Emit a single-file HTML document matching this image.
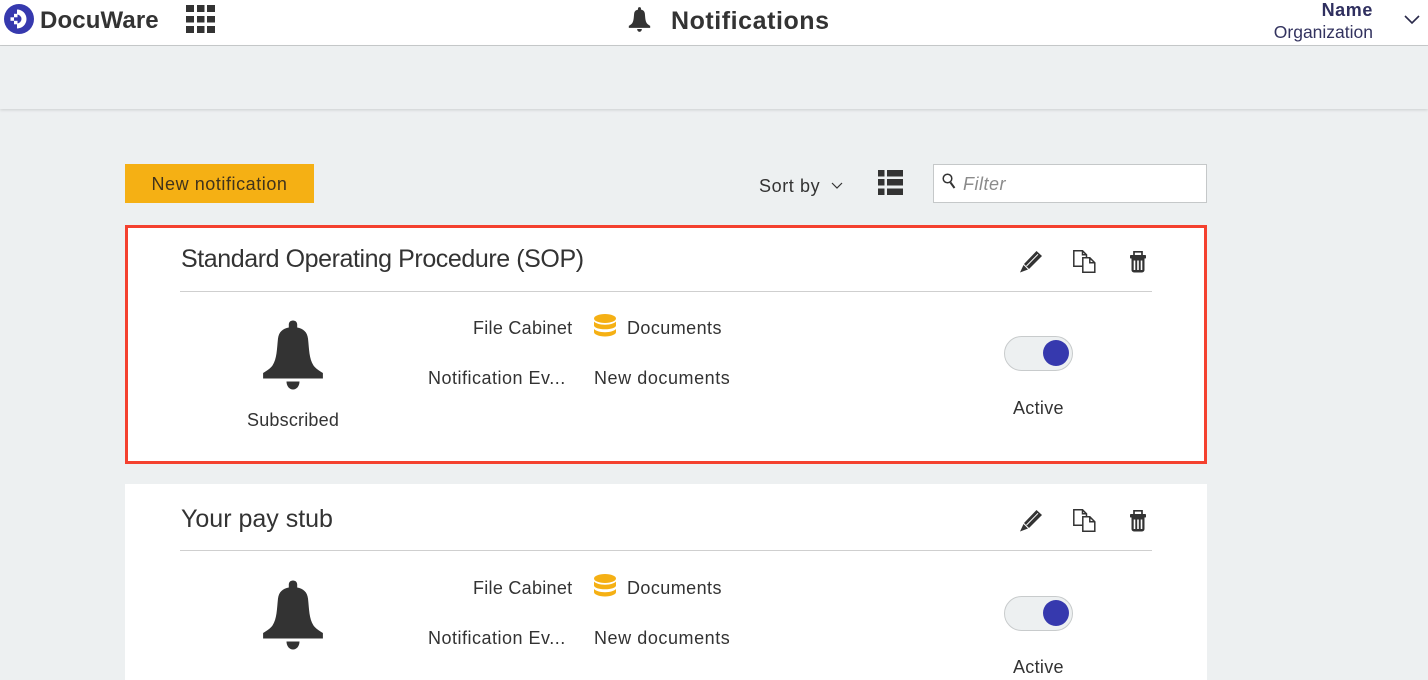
<!DOCTYPE html>
<html><head><meta charset="utf-8"><style>
html,body{margin:0;padding:0}
body{width:1428px;height:680px;overflow:hidden;position:relative;background:#edf0f1;font-family:"Liberation Sans",sans-serif;color:#333}
.a{position:absolute;white-space:nowrap}
.t{font-size:18px;line-height:24px}
svg{position:absolute;display:block}
</style></head><body>
<div class="a" style="left:0;top:0;width:1428px;height:45px;background:#fff;border-bottom:1px solid #c9cccd"></div>
<div class="a" style="left:0;top:46px;width:1428px;height:63px;background:#edf0f1;box-shadow:0 1px 3px rgba(0,0,0,.14)"></div>

<svg style="left:4px;top:4px" width="30" height="30" viewBox="0 0 30 30"><circle cx="15" cy="15" r="15" fill="#3639ae"/><path d="M13 5.500a9.500 9.500 0 1 1 0 19v-5a4.500 4.500 0 1 0 0-9z" fill="#fff"/><rect x="6.500" y="13.300" width="3.500" height="3.500" fill="#fff"/><rect x="10" y="9.800" width="3.500" height="3.500" fill="#fff"/><rect x="10" y="16.800" width="3.500" height="3.500" fill="#fff"/></svg>
<div class="a" style="left:40px;top:7px;font-size:24px;line-height:28px;font-weight:700;letter-spacing:.12px;color:#333">DocuWare</div>
<svg style="left:186px;top:5px" width="29" height="28" viewBox="0 0 29 28" fill="#333"><rect x="0" y="0" width="8" height="7"/><rect x="11" y="0" width="7.500" height="7"/><rect x="21" y="0" width="8" height="7"/><rect x="0" y="11" width="8" height="6.500"/><rect x="11" y="11" width="7.500" height="6.500"/><rect x="21" y="11" width="8" height="6.500"/><rect x="0" y="21" width="8" height="7"/><rect x="11" y="21" width="7.500" height="7"/><rect x="21" y="21" width="8" height="7"/></svg>

<svg style="left:628px;top:7px" width="23" height="25" viewBox="0 0 60 70" fill="#333"><path d="M30 .5c2.600 0 4.200 1.800 4.200 4V7.500c6 1 10 4.500 10.800 11 1.200 11 1 20 5.500 27 2.300 3.200 5.500 5 9.400 7.500v5.500H.100V53c3.900-2.500 7.100-4.300 9.400-7.500 4.500-7 4.300-16 5.500-27 .8-6.500 4.800-10 10.800-11V4.500C25.800 2.300 27.400 .5 30 .5z"/><path d="M23.500 61.500h13c0 4.500-2.800 8-6.500 8s-6.500-3.500-6.500-8z"/></svg>
<div class="a" style="left:671px;top:5px;font-size:25px;line-height:32px;font-weight:700;letter-spacing:.55px;color:#333">Notifications</div>

<div class="a" style="right:55px;top:-2px;font-size:18px;line-height:24px;font-weight:700;letter-spacing:.6px;color:#2f2f5f">Name</div>
<div class="a" style="right:55px;top:20px;font-size:17.500px;line-height:24px;color:#33335f">Organization</div>
<svg style="left:1403px;top:13px" width="18" height="12" viewBox="0 0 18 12"><path d="M2 3l7 7 7-7" fill="none" stroke="#2a2a4a" stroke-width="1.600"/></svg>

<div class="a" style="left:125px;top:164px;width:189px;height:39px;background:#f5b014;font-size:18px;line-height:40px;text-align:center;letter-spacing:.56px;color:#40331c">New notification</div>
<div class="a t" style="left:759px;top:174px;letter-spacing:.6px">Sort by</div>
<svg style="left:831px;top:181px" width="12" height="9" viewBox="0 0 12 9"><path d="M1 2l5 5 5-5" fill="none" stroke="#333" stroke-width="1.200"/></svg>
<svg style="left:878px;top:170px" width="25" height="25" viewBox="0 0 25 25" fill="#333"><rect width="6.500" height="6.500"/><rect x="9" width="16" height="6.500"/><rect y="9" width="6.500" height="6.500"/><rect x="9" y="9" width="16" height="6.500"/><rect y="18.500" width="6.500" height="6.500"/><rect x="9" y="18.500" width="16" height="6.500"/></svg>
<div class="a" style="left:933px;top:164px;width:272px;height:37px;background:#fff;border:1px solid #c5c8c9"></div>
<svg style="left:941px;top:172px" width="16" height="18" viewBox="0 0 16 18"><circle cx="6.500" cy="6.500" r="4.300" fill="none" stroke="#333" stroke-width="1.500"/><path d="M9.500 10.500l4 5.500" stroke="#333" stroke-width="2"/></svg>
<div class="a" style="left:963px;top:172px;font-size:18px;line-height:24px;font-style:italic;letter-spacing:.5px;color:#8b8b8b">Filter</div>

<div class="a" style="left:125px;top:225px;width:1076px;height:233px;background:#fff;border:3px solid #f4412f"></div>
<div class="a" style="left:125px;top:484px;width:1082px;height:196px;background:#fff"></div>

<!-- card 1 -->
<div class="a" style="left:181px;top:243px;font-size:25px;line-height:32px;letter-spacing:-.42px;color:#333">Standard Operating Procedure (SOP)</div>
<div class="a" style="left:180px;top:291px;width:972px;height:1px;background:#cfcfcf"></div>
<svg style="left:1020px;top:250px" width="22" height="23" viewBox="0 0 22 23"><path d="M16.500 1L22 6 9 19 4 14z" fill="#333"/><path d="M6.500 16L18 4.300" stroke="#fff" stroke-width="1"/><path d="M3.500 15l4.500 4.500L0 22.500z" fill="#333"/></svg>
<svg style="left:1073px;top:250px" width="23" height="23" viewBox="0 0 23 23" fill="#fff" stroke="#333" stroke-width="1.500"><path d="M.800.800h8.700l4 4v11.500H.800z"/><path d="M9.500.800v4h4" fill="none"/><path d="M9.800 7.800h7l5 5v9.400H9.800z"/><path d="M16.800 7.800v5h5" fill="none"/></svg>
<svg style="left:1129px;top:250px" width="18" height="23" viewBox="0 0 18 23" fill="#333"><path d="M5 5.500V1.800h8v3.700" fill="none" stroke="#333" stroke-width="1.700"/><rect x="1" y="5" width="16" height="3.500" rx=".8"/><path fill-rule="evenodd" d="M2.500 8h13v12a2.500 2.500 0 0 1-2.500 2.500H5A2.500 2.500 0 0 1 2.500 20zM4.700 10.500v9.500h1.600v-9.500zM8.200 10.500v9.500h1.600v-9.500zM11.700 10.500v9.500h1.600v-9.500z"/></svg>
<svg style="left:263px;top:320px" width="60" height="70" viewBox="0 0 60 70" fill="#333"><path d="M30 .5c2.600 0 4.200 1.800 4.200 4V7.500c6 1 10 4.500 10.800 11 1.200 11 1 20 5.500 27 2.300 3.200 5.500 5 9.400 7.500v5.500H.100V53c3.900-2.500 7.100-4.300 9.400-7.500 4.500-7 4.300-16 5.500-27 .8-6.500 4.800-10 10.800-11V4.500C25.800 2.300 27.400 .5 30 .5z"/><path d="M23.500 61.500h13c0 4.500-2.800 8-6.500 8s-6.500-3.500-6.500-8z"/></svg>
<div class="a t" style="left:247px;top:408px;letter-spacing:.2px">Subscribed</div>
<div class="a t" style="left:473px;top:316px;letter-spacing:.28px">File Cabinet</div>
<svg style="left:594px;top:314px" width="22" height="23" viewBox="0 0 22 23" fill="#f5b014"><ellipse cx="11" cy="4.500" rx="11" ry="4.500"/><path d="M0 7.500c2 2 6 3.200 11 3.200s9-1.200 11-3.200v4c0 2.200-5 3.800-11 3.800S0 13.700 0 11.500z"/><path d="M0 15c2 2 6 3.200 11 3.200s9-1.200 11-3.200v3.300c0 2.200-5 4.200-11 4.200S0 20.500 0 18.300z"/></svg>
<div class="a t" style="left:627px;top:316px;letter-spacing:.43px">Documents</div>
<div class="a t" style="left:428px;top:366px;letter-spacing:.5px">Notification Ev...</div>
<div class="a t" style="left:594px;top:366px;letter-spacing:.56px">New documents</div>
<div class="a" style="left:1004px;top:336px;width:67px;height:33px;background:#edf0f1;border:1px solid #c8cbcc;border-radius:18px"></div>
<div class="a" style="left:1043px;top:340px;width:26px;height:26px;background:#3639ae;border-radius:50%"></div>
<div class="a t" style="left:1013px;top:396px;letter-spacing:.3px">Active</div>

<!-- card 2 -->
<div class="a" style="left:181px;top:503px;font-size:25px;line-height:32px;color:#333">Your pay stub</div>
<div class="a" style="left:180px;top:550px;width:972px;height:1px;background:#cfcfcf"></div>
<svg style="left:1020px;top:509px" width="22" height="23" viewBox="0 0 22 23"><path d="M16.500 1L22 6 9 19 4 14z" fill="#333"/><path d="M6.500 16L18 4.300" stroke="#fff" stroke-width="1"/><path d="M3.500 15l4.500 4.500L0 22.500z" fill="#333"/></svg>
<svg style="left:1073px;top:509px" width="23" height="23" viewBox="0 0 23 23" fill="#fff" stroke="#333" stroke-width="1.500"><path d="M.800.800h8.700l4 4v11.500H.800z"/><path d="M9.500.800v4h4" fill="none"/><path d="M9.800 7.800h7l5 5v9.400H9.800z"/><path d="M16.800 7.800v5h5" fill="none"/></svg>
<svg style="left:1129px;top:509px" width="18" height="23" viewBox="0 0 18 23" fill="#333"><path d="M5 5.500V1.800h8v3.700" fill="none" stroke="#333" stroke-width="1.700"/><rect x="1" y="5" width="16" height="3.500" rx=".8"/><path fill-rule="evenodd" d="M2.500 8h13v12a2.500 2.500 0 0 1-2.500 2.500H5A2.500 2.500 0 0 1 2.500 20zM4.700 10.500v9.500h1.600v-9.500zM8.200 10.500v9.500h1.600v-9.500zM11.700 10.500v9.500h1.600v-9.500z"/></svg>
<svg style="left:263px;top:580px" width="60" height="70" viewBox="0 0 60 70" fill="#333"><path d="M30 .5c2.600 0 4.200 1.800 4.200 4V7.500c6 1 10 4.500 10.800 11 1.200 11 1 20 5.500 27 2.300 3.200 5.500 5 9.400 7.500v5.500H.100V53c3.900-2.500 7.100-4.300 9.400-7.500 4.500-7 4.300-16 5.500-27 .8-6.500 4.800-10 10.800-11V4.500C25.800 2.300 27.400 .5 30 .5z"/><path d="M23.500 61.500h13c0 4.500-2.800 8-6.500 8s-6.500-3.500-6.500-8z"/></svg>
<div class="a t" style="left:473px;top:576px;letter-spacing:.28px">File Cabinet</div>
<svg style="left:594px;top:574px" width="22" height="23" viewBox="0 0 22 23" fill="#f5b014"><ellipse cx="11" cy="4.500" rx="11" ry="4.500"/><path d="M0 7.500c2 2 6 3.200 11 3.200s9-1.200 11-3.200v4c0 2.200-5 3.800-11 3.800S0 13.700 0 11.500z"/><path d="M0 15c2 2 6 3.200 11 3.200s9-1.200 11-3.200v3.300c0 2.200-5 4.200-11 4.200S0 20.500 0 18.300z"/></svg>
<div class="a t" style="left:627px;top:576px;letter-spacing:.43px">Documents</div>
<div class="a t" style="left:428px;top:626px;letter-spacing:.5px">Notification Ev...</div>
<div class="a t" style="left:594px;top:626px;letter-spacing:.56px">New documents</div>
<div class="a" style="left:1004px;top:596px;width:67px;height:33px;background:#edf0f1;border:1px solid #c8cbcc;border-radius:18px"></div>
<div class="a" style="left:1043px;top:600px;width:26px;height:26px;background:#3639ae;border-radius:50%"></div>
<div class="a t" style="left:1013px;top:655px;letter-spacing:.3px">Active</div>
</body></html>
